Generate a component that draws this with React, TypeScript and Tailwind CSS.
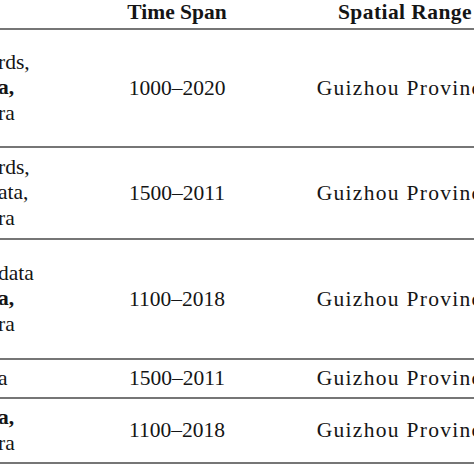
const rows = [
  { h: "h-[118px]", left: [["rds,", false], ["a,", true], ["ra", false]], span: "1000–2020" },
  { h: "h-[92px]", left: [["rds,", false], ["ata,", false], ["ra", false]], span: "1500–2011" },
  { h: "h-[120px]", left: [["data", false], ["a,", true], ["ra", false]], span: "1100–2018" },
  { h: "h-[39px]", left: [["a", false]], span: "1500–2011" },
  { h: "h-[65px]", left: [["a,", true], ["ra", false]], span: "1100–2018" },
] as const

export default function App() {
  return (
    <div
      className="h-[474px] w-[474px] overflow-hidden bg-white text-[21.5px] text-[#151515]"
      style={{ fontFamily: '"Liberation Serif", "Times New Roman", serif' }}
    >
      <div className="w-[560px]">
        <div className="flex h-[30px] items-start border-b-2 border-[#767676] font-bold leading-[24px]">
          <div className="w-[100px]" />
          <div className="w-[154px] text-center">Time Span</div>
          <div className="w-[302px] text-center tracking-[0.02em]">Spatial Range</div>
        </div>
        {rows.map((r, i) => (
          <div key={i} className={`flex items-center border-b-2 border-[#767676] ${r.h}`}>
            <div className="-ml-[2px] flex w-[102px] flex-col leading-[25.5px]">
              {r.left.map(([t, b], j) => (
                <span key={j} className={b ? "font-bold" : ""}>
                  {t}
                </span>
              ))}
            </div>
            <div className="w-[154px] text-center">{r.span}</div>
            <div className="w-[302px] text-center tracking-[0.06em]">Guizhou Province</div>
          </div>
        ))}
      </div>
    </div>
  )
}
